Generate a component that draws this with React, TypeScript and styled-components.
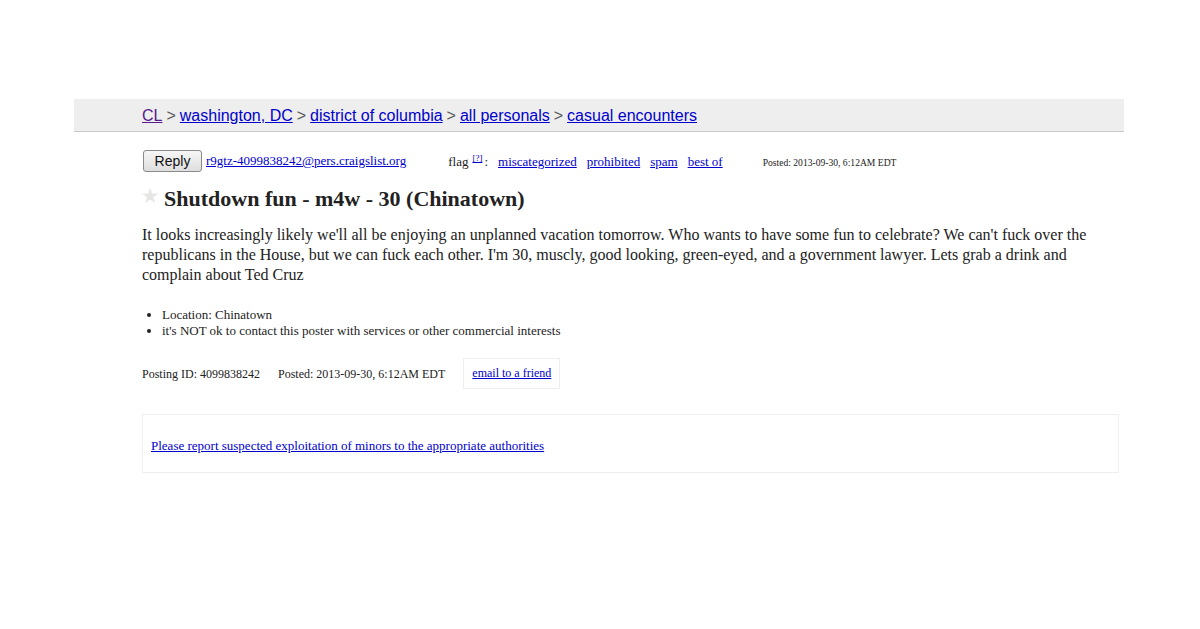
import React from 'react';
import styled, { createGlobalStyle } from 'styled-components';

const GlobalStyle = createGlobalStyle`
  html, body {
    margin: 0;
    padding: 0;
    background: #ffffff;
  }
  body {
    font-family: "Liberation Serif", "Times New Roman", serif;
    color: #222;
  }
`;

const Page = styled.div`
  padding-top: 99px;
  width: 1200px;
`;

const Header = styled.header`
  margin-left: 74px;
  width: 1050px;
  height: 33px;
  background: #eeeeee;
  border-bottom: 1px solid #c8c8c8;
  display: flex;
  align-items: center;
  padding: 2px 0 0 68px;
  box-sizing: border-box;
  font-family: "Liberation Sans", Arial, sans-serif;
  font-size: 16px;
  color: #555;
`;

const Crumb = styled.a<{ $visited?: boolean }>`
  color: ${(p) => (p.$visited ? '#551a8b' : '#0000cc')};
  text-decoration: underline;
`;

const Sep = styled.span`
  margin: 0 4px;
  color: #555;
`;

const Content = styled.main`
  margin-left: 142px;
  width: 977px;
`;

const ActionBar = styled.div`
  display: flex;
  align-items: center;
  margin-top: 18px;
  height: 22px;
  font-size: 13px;
`;

const ReplyButton = styled.button`
  font-family: "Liberation Sans", Arial, sans-serif;
  font-size: 14px;
  height: 22px;
  width: 59px;
  padding: 0;
  margin-left: 1px;
  border: 1px solid #8a8a8a;
  border-radius: 3px;
  background: linear-gradient(#f6f6f6, #dedede);
  color: #111;
`;

const SmallLink = styled.a<{ $size?: number }>`
  color: #0000cc;
  text-decoration: underline;
  font-size: ${(p) => p.$size ?? 13}px;
`;

const Flag = styled.span`
  margin-left: 42px;
  display: flex;
  align-items: center;
  gap: 10px;
  color: #222;
  padding-top: 2px;
`;

const Sup = styled.sup`
  font-size: 9px;
  color: #0000cc;
  text-decoration: underline;
  margin-left: 4px;
  margin-right: 2px;
`;

const PostedSmall = styled.span`
  margin-left: 40px;
  font-size: 9.6px;
  color: #222;
  padding-top: 2px;
`;

const Title = styled.h2`
  display: flex;
  align-items: center;
  margin: 12px 0 0;
  font-size: 22px;
  font-weight: bold;
  color: #222;
  height: 30px;
`;

const Star = styled.span`
  color: #e6e6e6;
  font-size: 18px;
  width: 22px;
  margin-top: -6px;
`;

const Body = styled.section`
  margin-top: 11px;
  font-size: 16px;
  line-height: 20px;
  color: #222;
`;

const Attrs = styled.ul`
  margin: 22px 0 0;
  padding-left: 20px;
  font-size: 13px;
  line-height: 16px;
`;

const PostInfo = styled.div`
  display: flex;
  align-items: center;
  margin-top: 19px;
  font-size: 12px;
  color: #222;
`;

const InfoText = styled.span`
  margin-right: 18px;
  padding-top: 1px;
`;

const EmailBox = styled.div`
  padding: 8px;
  border: 1px solid #eeeeee;
  height: 13px;
  display: flex;
  align-items: center;
`;

const ReportBox = styled.div`
  margin-top: 25px;
  height: 59px;
  border: 1px solid #eeeeee;
  display: flex;
  align-items: center;
  padding: 4px 8px 0;
  box-sizing: border-box;
`;

export default function App() {
  return (
    <>
      <GlobalStyle />
      <Page>
        <Header>
          <Crumb $visited href="#">CL</Crumb>
          <Sep>&gt;</Sep>
          <Crumb href="#">washington, DC</Crumb>
          <Sep>&gt;</Sep>
          <Crumb href="#">district of columbia</Crumb>
          <Sep>&gt;</Sep>
          <Crumb href="#">all personals</Crumb>
          <Sep>&gt;</Sep>
          <Crumb href="#">casual encounters</Crumb>
        </Header>
        <Content>
          <ActionBar>
            <ReplyButton type="button">Reply</ReplyButton>
            <SmallLink href="#" style={{ marginLeft: 4 }}>
              r9gtz-4099838242@pers.craigslist.org
            </SmallLink>
            <Flag>
              <span>
                flag<Sup>[?]</Sup>:
              </span>
              <SmallLink href="#">miscategorized</SmallLink>
              <SmallLink href="#">prohibited</SmallLink>
              <SmallLink href="#">spam</SmallLink>
              <SmallLink href="#">best of</SmallLink>
            </Flag>
            <PostedSmall>Posted: 2013-09-30, 6:12AM EDT</PostedSmall>
          </ActionBar>
          <Title>
            <Star>★</Star>
            Shutdown fun - m4w - 30 (Chinatown)
          </Title>
          <Body>
            It looks increasingly likely we'll all be enjoying an unplanned vacation tomorrow. Who
            wants to have some fun to celebrate? We can't fuck over the republicans in the House, but
            we can fuck each other. I'm 30, muscly, good looking, green-eyed, and a government lawyer.
            Lets grab a drink and complain about Ted Cruz
          </Body>
          <Attrs>
            <li>Location: Chinatown</li>
            <li>it's NOT ok to contact this poster with services or other commercial interests</li>
          </Attrs>
          <PostInfo>
            <InfoText>Posting ID: 4099838242</InfoText>
            <InfoText>Posted: 2013-09-30, 6:12AM EDT</InfoText>
            <EmailBox>
              <SmallLink href="#" $size={12}>email to a friend</SmallLink>
            </EmailBox>
          </PostInfo>
          <ReportBox>
            <SmallLink href="#">Please report suspected exploitation of minors to the appropriate authorities</SmallLink>
          </ReportBox>
        </Content>
      </Page>
    </>
  );
}
